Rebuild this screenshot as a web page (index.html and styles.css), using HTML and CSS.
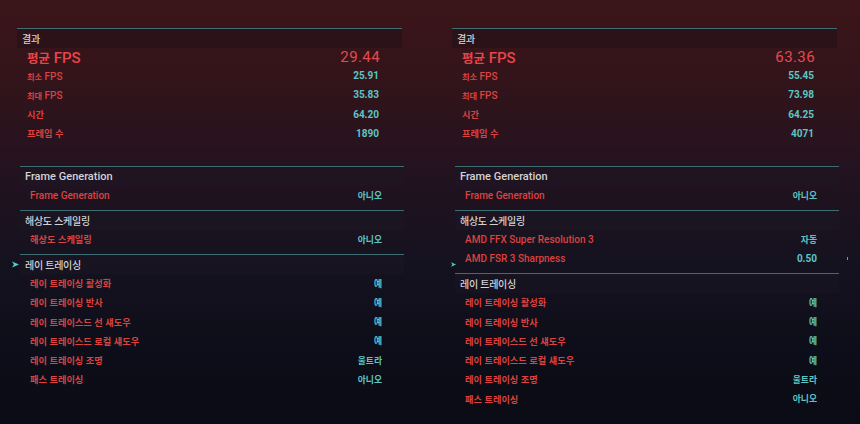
FILE: index.html
```html
<!DOCTYPE html>
<html lang="ko">
<head>
<meta charset="utf-8">
<link rel="stylesheet" href="styles.css">
</head>
<body>
<div class="screen">
  <div class="panel">
    <div class="results">
      <div class="band"><span class="ko hd">결과</span></div>
      <div class="avg"><span class="lbl"><span class="ko-big">평균</span> FPS</span><span class="big">29.44</span></div>
      <div class="row"><span class="lbl"><span class="ko">최소</span> FPS</span><span class="val">25.91</span></div>
      <div class="row"><span class="lbl"><span class="ko">최대</span> FPS</span><span class="val">35.83</span></div>
      <div class="row"><span class="lbl ko">시간</span><span class="val">64.20</span></div>
      <div class="row"><span class="lbl ko">프레임 수</span><span class="val">1890</span></div>
    </div>
    <div class="section">
      <div class="band"><span class="hd">Frame Generation</span></div>
      <div class="row"><span class="lbl">Frame Generation</span><span class="val ko">아니오</span></div>
    </div>
    <div class="section">
      <div class="band"><span class="hd ko">해상도 스케일링</span></div>
      <div class="row"><span class="lbl ko">해상도 스케일링</span><span class="val ko">아니오</span></div>
    </div>
    <div class="section">
      <div class="band">
        <svg class="cursor" viewBox="0 0 8 8" width="7" height="7"><polygon points="0,0.5 8,4 0,7.5 2.2,4" fill="#4fd0c8"/></svg>
        <span class="hd ko">레이 트레이싱</span>
      </div>
      <div class="row"><span class="lbl ko">레이 트레이싱 활성화</span><span class="val ko">예</span></div>
      <div class="row"><span class="lbl ko">레이 트레이싱 반사</span><span class="val ko">예</span></div>
      <div class="row"><span class="lbl ko">레이 트레이스드 선 섀도우</span><span class="val ko">예</span></div>
      <div class="row"><span class="lbl ko">레이 트레이스드 로컬 섀도우</span><span class="val ko">예</span></div>
      <div class="row"><span class="lbl ko">레이 트레이싱 조명</span><span class="val ko">울트라</span></div>
      <div class="row"><span class="lbl ko">패스 트레이싱</span><span class="val ko">아니오</span></div>
    </div>
  </div>

  <div class="panel">
    <div class="results">
      <div class="band"><span class="ko hd">결과</span></div>
      <div class="avg"><span class="lbl"><span class="ko-big">평균</span> FPS</span><span class="big">63.36</span></div>
      <div class="row"><span class="lbl"><span class="ko">최소</span> FPS</span><span class="val">55.45</span></div>
      <div class="row"><span class="lbl"><span class="ko">최대</span> FPS</span><span class="val">73.98</span></div>
      <div class="row"><span class="lbl ko">시간</span><span class="val">64.25</span></div>
      <div class="row"><span class="lbl ko">프레임 수</span><span class="val">4071</span></div>
    </div>
    <div class="section">
      <div class="band"><span class="hd">Frame Generation</span></div>
      <div class="row"><span class="lbl">Frame Generation</span><span class="val ko">아니오</span></div>
    </div>
    <div class="section">
      <div class="band"><span class="hd ko">해상도 스케일링</span></div>
      <div class="row"><span class="lbl">AMD FFX Super Resolution 3</span><span class="val ko">자동</span></div>
      <div class="row">
        <svg class="cursor small" viewBox="0 0 8 8" width="5" height="5"><polygon points="0,0.5 8,4 0,7.5 2.2,4" fill="#4fd0c8"/></svg>
        <span class="lbl">AMD FSR 3 Sharpness</span><span class="val">0.50</span>
      </div>
    </div>
    <div class="section">
      <div class="band"><span class="hd ko">레이 트레이싱</span></div>
      <div class="row"><span class="lbl ko">레이 트레이싱 활성화</span><span class="val ko">예</span></div>
      <div class="row"><span class="lbl ko">레이 트레이싱 반사</span><span class="val ko">예</span></div>
      <div class="row"><span class="lbl ko">레이 트레이스드 선 섀도우</span><span class="val ko">예</span></div>
      <div class="row"><span class="lbl ko">레이 트레이스드 로컬 섀도우</span><span class="val ko">예</span></div>
      <div class="row"><span class="lbl ko">레이 트레이싱 조명</span><span class="val ko">울트라</span></div>
      <div class="row"><span class="lbl ko">패스 트레이싱</span><span class="val ko">아니오</span></div>
    </div>
    <span class="tick"></span>
  </div>
</div>
</body>
</html>
```
FILE: styles.css
```css
html, body {
  margin: 0;
  padding: 0;
}
body {
  width: 860px;
  height: 424px;
  overflow: hidden;
  font-family: "Roboto", "Noto Sans CJK KR", sans-serif;
  background: linear-gradient(180deg, #3b1519 0%, #33141a 18%, #221220 42%, #15121f 62%, #0d0e19 82%, #0a0b14 100%);
}
.screen {
  display: grid;
  grid-template-columns: 435px 425px;
  height: 424px;
}
.panel {
  position: relative;
  padding: 28px 0 0 17px;
  width: 387px;
}
.results {
  width: 385px;
  border-top: 1px solid #3d6c72;
}
.section {
  width: 384px;
  margin-left: 3px;
  border-top: 1px solid #3d6c72;
  padding-bottom: 4.5px;
}
.results + .section {
  margin-top: 23px;
}
.band {
  position: relative;
  height: 19px;
  display: flex;
  align-items: center;
  padding-left: 5px;
  background: rgba(28, 24, 36, 0.38);
}
.results .band {
  background: rgba(20, 14, 22, 0.35);
}
.hd {
  color: #d2d2d6;
  font-size: 11px;
  font-weight: 500;
}
.hd.ko {
  font-size: 10px;
  font-family: "Noto Sans CJK KR", sans-serif;
  letter-spacing: -0.3px;
}
.avg {
  height: 18px;
  display: flex;
  align-items: center;
  justify-content: space-between;
  padding: 0 22px 0 10px;
}
.avg .lbl {
  color: #e8454b;
  font-size: 15px;
  font-weight: 500;
}
.ko-big {
  font-family: "Noto Sans CJK KR", sans-serif;
  font-size: 12.5px;
  font-weight: 700;
}
.big {
  color: #e44a4e;
  font-size: 15px;
  letter-spacing: 0.4px;
}
.row {
  position: relative;
  height: 19.25px;
  display: flex;
  align-items: center;
  justify-content: space-between;
  padding: 0 22px 0 10px;
}
.results .row {
  padding-right: 23px;
}
.lbl {
  color: #db4240;
  font-size: 10px;
  font-weight: 500;
}
.lbl.ko, .lbl .ko {
  font-family: "Noto Sans CJK KR", sans-serif;
  font-size: 9.2px;
  font-weight: 700;
}
.lbl .ko {
  font-size: 8.2px;
}
.val {
  color: #5cc6c4;
  font-size: 10px;
  font-weight: 700;
}
.val.ko {
  font-family: "Noto Sans CJK KR", sans-serif;
  font-size: 8.8px;
}
.cursor {
  position: absolute;
  left: -8px;
  top: 6px;
}
.cursor.small {
  left: -4px;
  top: 13px;
}
.tick {
  position: absolute;
  left: 412px;
  top: 257px;
  width: 1px;
  height: 3px;
  background: #8a8f98;
}
```
